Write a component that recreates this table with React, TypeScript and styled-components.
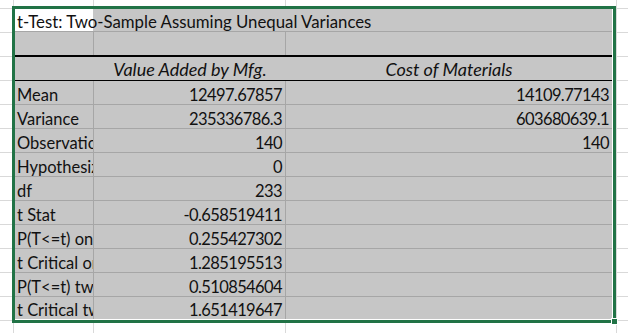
import React from 'react';
import styled, { createGlobalStyle } from 'styled-components';

const GlobalStyle = createGlobalStyle`
  html, body { margin: 0; padding: 0; background: #fff; }
  body { width: 628px; height: 333px; overflow: hidden; }
`;

const GRID = '#d9d9d9';
const SEL_GRID = '#a6a6a6';
const FILL = '#c6c6c6';
const GREEN = '#217346';

const Sheet = styled.div`
  box-sizing: border-box;
  width: 628px; height: 333px;
  padding: 6px 0 0 12px;
  font-family: Lato, 'Liberation Sans', sans-serif;
  font-size: 16.5px;
  color: #111;
  background:
    linear-gradient(${GRID}, ${GRID}) 13px 0 / 1px 100% no-repeat,
    linear-gradient(${GRID}, ${GRID}) 93px 0 / 1px 100% no-repeat,
    linear-gradient(${GRID}, ${GRID}) 285px 0 / 1px 100% no-repeat,
    linear-gradient(${GRID}, ${GRID}) 616px 0 / 1px 100% no-repeat,
    repeating-linear-gradient(to bottom, transparent 0 8px, ${GRID} 8px 9px, transparent 9px 24px) 0 0 / 100% 100%;
  background-color: #fff;
`;

const Selection = styled.div`
  position: relative;
  width: 604px;
  box-sizing: border-box;
  border: 3px solid ${GREEN};
`;

const Inner = styled.div`
  border-right: 1px solid #fff;
  border-bottom: 1px solid #fff;
  background: ${FILL};
`;

const TitleRow = styled.div`
  height: 22px;
  border-bottom: 1px solid ${SEL_GRID};
`;

const TitleCell = styled.div`
  width: 78px; height: 22px;
  background: #fff;
  padding-left: 2px;
  box-sizing: border-box;
  font-size: 16.8px;
  white-space: nowrap;
  overflow: visible;
  line-height: 18px;
  display: flex; align-items: flex-end;
`;

const Row = styled.div<{ $h: number; $line: string }>`
  display: grid;
  grid-template-columns: 79px 192px 326px;
  height: ${p => p.$h}px;
  border-bottom: ${p => p.$line};
`;

const Cell = styled.div<{ $align?: 'left' | 'right'; $sep?: boolean }>`
  box-sizing: border-box;
  display: flex; align-items: flex-end;
  justify-content: ${p => p.$align === 'right' ? 'flex-end' : 'flex-start'};
  padding: ${p => p.$align === 'right' ? '0 3px 0 0' : '0 0 0 2px'};
  border-right: ${p => p.$sep ? `1px solid ${SEL_GRID}` : 'none'};
  letter-spacing: ${p => p.$align === 'right' ? '-0.6px' : 'normal'};
  white-space: nowrap;
  overflow: hidden;
  line-height: 18px;
`;

const HeadCell = styled.div`
  display: flex; align-items: flex-end; justify-content: center;
  font-style: italic;
  font-size: 18px;
  line-height: 20px;
  padding-bottom: 1px;
  white-space: nowrap;
`;

const FillHandle = styled.div`
  position: absolute;
  right: -5px; bottom: -5px;
  width: 5px; height: 5px;
  background: ${GREEN};
  border: 1px solid #fff;
`;

const rows: [string, string, string][] = [
  ['Mean', '12497.67857', '14109.77143'],
  ['Variance', '235336786.3', '603680639.1'],
  ['Observations', '140', '140'],
  ['Hypothesized Mean Difference', '0', ''],
  ['df', '233', ''],
  ['t Stat', '-0.658519411', ''],
  ['P(T<=t) one-tail', '0.255427302', ''],
  ['t Critical one-tail', '1.285195513', ''],
  ['P(T<=t) two-tail', '0.510854604', ''],
  ['t Critical two-tail', '1.651419647', ''],
];

export default function App() {
  return (
    <>
      <GlobalStyle />
      <Sheet>
        <Selection>
          <Inner>
            <TitleRow>
              <TitleCell>t-Test: Two-Sample Assuming Unequal Variances</TitleCell>
            </TitleRow>
            <Row $h={23} $line="2px solid #000">
              <Cell $sep /><Cell $sep /><Cell />
            </Row>
            <Row $h={23} $line="1px solid #000">
              <HeadCell />
              <HeadCell>Value Added by Mfg.</HeadCell>
              <HeadCell>Cost of Materials</HeadCell>
            </Row>
            {rows.map(([label, a, b], i) => {
              const last = i === rows.length - 1;
              return (
                <Row key={label} $h={last ? 22 : 23} $line={last ? 'none' : `1px solid ${SEL_GRID}`}>
                  <Cell $sep>{label}</Cell>
                  <Cell $sep $align="right">{a}</Cell>
                  <Cell $align="right">{b}</Cell>
                </Row>
              );
            })}
          </Inner>
          <FillHandle />
        </Selection>
      </Sheet>
    </>
  );
}
